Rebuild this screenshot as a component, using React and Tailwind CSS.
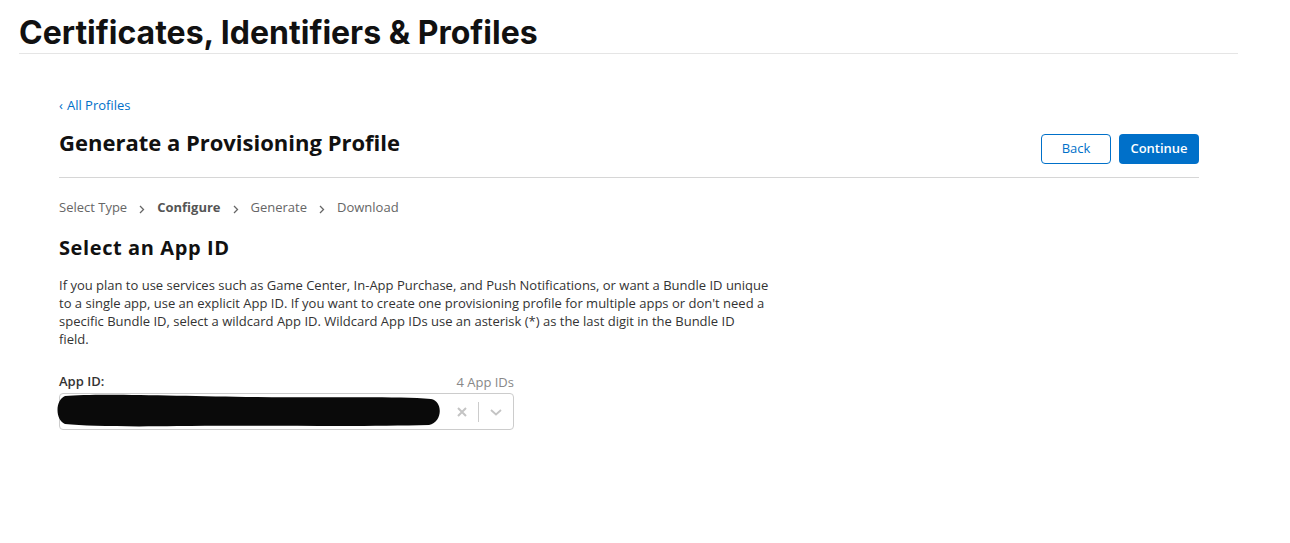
import React from "react";

const steps = ["Select Type", "Configure", "Generate", "Download"];

export default function App() {
  return (
    <div className="w-[1290px] h-[543px] bg-white text-[#111] overflow-hidden" style={{ fontFamily: '"Open Sans", "Noto Sans", sans-serif' }}>
      {/* top title */}
      <div className="pl-[19px] pr-[52px] pt-[13px]">
        <h1 className="text-[32px] leading-[40px] font-bold text-[#111]" style={{ fontFamily: "Inter, sans-serif" }}>
          Certificates, Identifiers &amp; Profiles
        </h1>
        <div className="h-px bg-[#e5e5e5]" />
      </div>

      <div className="w-[1140px] ml-[59px] pt-[42px]">
        <a className="text-[13px] leading-[18px] text-[#0070c9] flex items-center gap-[4px]">
          <span className="text-[13px]">‹</span> All Profiles
        </a>

        <div className="flex items-start justify-between mt-[14px]">
          <h2 className="text-[22px] leading-[28px] font-bold text-[#111]">Generate a Provisioning Profile</h2>
          <div className="flex gap-[8px] mt-[6px]">
            <button className="w-[70px] h-[30px] rounded-[4px] border border-[#0070c9] text-[#0070c9] text-[13px]">Back</button>
            <button className="w-[80px] h-[30px] rounded-[4px] bg-[#0070c9] text-white text-[13px] font-semibold">Continue</button>
          </div>
        </div>
        <div className="h-px bg-[#d6d6d6] mt-[13px]" />

        <div className="flex items-center mt-[20px] text-[13px] leading-[18px] text-[#666]">
          {steps.map((s, i) => (
            <React.Fragment key={s}>
              {i > 0 && (
                <svg width="6" height="9" viewBox="0 0 6 9" className="mx-[12px] mt-[4px]">
                  <path d="M1 1l3.5 3.5L1 8" fill="none" stroke="#666" strokeWidth="1.3" />
                </svg>
              )}
              <span className={i === 1 ? "font-bold text-[#555]" : ""}>{s}</span>
            </React.Fragment>
          ))}
        </div>

        <h3 className="text-[20px] leading-[26px] font-bold text-[#111] mt-[19px] tracking-[0.6px]">Select an App ID</h3>

        <p className="w-[712px] text-[13px] leading-[18px] text-[#333] mt-[15px]">
          If you plan to use services such as Game Center, In-App Purchase, and Push Notifications, or want a Bundle ID unique to a single app, use an explicit App ID. If you want to create one provisioning profile for multiple apps or don't need a specific Bundle ID, select a wildcard App ID. Wildcard App IDs use an asterisk (*) as the last digit in the Bundle ID<br />field.
        </p>

        <div className="w-[455px] mt-[25px]">
          <div className="flex justify-between items-end">
            <span className="text-[13px] leading-[16px] font-semibold text-[#333]">App ID:</span>
            <span className="text-[13px] leading-[16px] text-[#888] translate-y-[1px]">4 App IDs</span>
          </div>
          <div className="relative mt-[4px] h-[37px] border border-[#ccc] rounded-[4px] flex items-center justify-end pr-[10px]">
            <svg className="absolute left-[-3px] top-[-2px]" width="386" height="38" viewBox="0 0 386 38">
              <path d="M8 4 C40 1 120 4 200 5 C280 6 340 4 374 7 C386 9 386 30 372 33 C300 35 200 33 120 34 C70 35 30 34 8 32 C-2 28 -2 8 8 4 Z" fill="#0a0a0a" />
            </svg>
            <svg width="12" height="12" viewBox="0 0 12 12">
              <path d="M2 2l8 8M10 2l-8 8" stroke="#c4c4c4" strokeWidth="2" />
            </svg>
            <div className="w-px h-[20px] bg-[#ccc] mx-[10px]" />
            <svg width="14" height="10" viewBox="0 0 14 10">
              <path d="M2 3l5 4.5L12 3" fill="none" stroke="#c4c4c4" strokeWidth="1.8" />
            </svg>
          </div>
        </div>
      </div>
    </div>
  );
}
